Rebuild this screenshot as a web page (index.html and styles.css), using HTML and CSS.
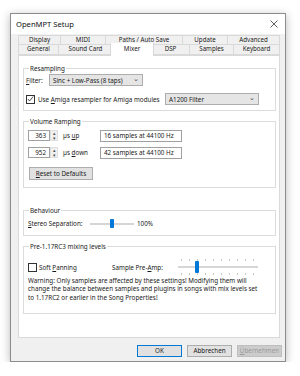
FILE: index.html
```html
<!DOCTYPE html>
<html>
<head>
<meta charset="utf-8">
<link rel="stylesheet" href="styles.css">
</head>
<body>
<div class="window">
  <div class="titlebar">
    <span class="title">OpenMPT Setup</span>
    <svg class="close" width="8" height="8" viewBox="0 0 8 8"><path d="M0.5 0.5 L7.5 7.5 M7.5 0.5 L0.5 7.5" stroke="#333" stroke-width="0.8"/></svg>
  </div>
  <div class="client">
    <div class="tabs">
      <div class="tabrow">
        <div class="tab w42">Display</div>
        <div class="tab w45">MIDI</div>
        <div class="tab w77">Paths / Auto Save</div>
        <div class="tab w45">Update</div>
        <div class="tab w53">Advanced</div>
      </div>
      <div class="tabrow">
        <div class="tab w40">General</div>
        <div class="tab w54">Sound Card</div>
        <div class="tab w40 sel">Mixer</div>
        <div class="tab w37">DSP</div>
        <div class="tab w44">Samples</div>
        <div class="tab w47">Keyboard</div>
      </div>
    </div>
    <div class="panel">
      <div class="group g-resamp">
        <div class="gtitle">Resampling</div>
        <div class="row r-filter">
          <span class="lbl"><u>F</u>ilter:</span>
          <div class="combo c-filter"><span>Sinc + Low-Pass (8 taps)</span><span class="chev">⌄</span></div>
        </div>
        <div class="row r-amiga">
          <span class="check on"><svg width="8" height="8" viewBox="0 0 8 8"><path d="M1 4 L3 6.3 L7 1.2" fill="none" stroke="#222" stroke-width="0.9"/></svg></span>
          <span class="lbl">Use <u>A</u>miga resampler for Amiga modules</span>
          <div class="combo c-a1200"><span>A1200 Filter</span><span class="chev">⌄</span></div>
        </div>
      </div>

      <div class="group g-ramp">
        <div class="gtitle">Volume Ramping</div>
        <div class="row r-ramp1">
          <div class="edit num">363</div>
          <div class="spin"><span>▴</span><span>▾</span></div>
          <span class="lbl unit">µs <u>u</u>p</span>
          <div class="edit info">16 samples at 44100 Hz</div>
        </div>
        <div class="row r-ramp2">
          <div class="edit num">952</div>
          <div class="spin"><span>▴</span><span>▾</span></div>
          <span class="lbl unit">µs <u>d</u>own</span>
          <div class="edit info">42 samples at 44100 Hz</div>
        </div>
        <div class="row r-reset">
          <div class="btn reset"><u>R</u>eset to Defaults</div>
        </div>
      </div>

      <div class="group g-behav">
        <div class="gtitle">Behaviour</div>
        <div class="row r-stereo">
          <span class="lbl stereo-lbl"><u>S</u>tereo Separation:</span>
          <div class="slider s-stereo"><div class="track"></div><div class="thumb" style="left:20px"></div></div>
          <span class="lbl pct">100%</span>
        </div>
      </div>

      <div class="group g-pre">
        <div class="gtitle">Pre-1.17RC3 mixing levels</div>
        <div class="row r-soft">
          <span class="check"></span>
          <span class="lbl soft-lbl">Soft <u>P</u>anning</span>
          <span class="lbl preamp-lbl">Sample Pre-<u>A</u>mp:</span>
          <div class="slider s-preamp">
            <div class="ticks top"></div>
            <div class="track"></div>
            <div class="ticks bot"></div>
            <div class="thumb tall" style="left:17px"></div>
          </div>
        </div>
        <div class="warn">Warning: Only samples are affected by these settings! Modifying them will change the balance between samples and plugins in songs with mix levels set to 1.17RC2 or earlier in the Song Properties!</div>
      </div>
    </div>
    <div class="buttons">
      <div class="btn dlg def">OK</div>
      <div class="btn dlg">Abbrechen</div>
      <div class="btn dlg dis"><u>Ü</u>bernehmen</div>
    </div>
  </div>
</div>
</body>
</html>
```
FILE: styles.css
```css
html, body {
  margin: 0;
  padding: 0;
  background: #ffffff;
}
body {
  padding: 13px 0 0 10px;
  font-family: "Noto Sans", "Open Sans", sans-serif;
  font-size: 6.3px;
  color: #1a1a1a;
}
u { text-decoration: underline; text-underline-offset: 1px; text-decoration-thickness: 0.5px; }

.window {
  width: 276px;
  height: 349px;
  box-sizing: border-box;
  border: 1px solid #8c8c8c;
  background: #f0f0f0;
  box-shadow: 0 2px 9px rgba(0,0,0,0.28);
  display: flex;
  flex-direction: column;
}
.titlebar {
  height: 20px;
  background: #ffffff;
  display: flex;
  align-items: center;
  justify-content: space-between;
  padding: 0 7px 0 5px;
  flex: none;
}
.title {
  font-size: 7.6px;
  color: #111;
}
.close { margin-top: -1px; }

.client {
  flex: 1;
  padding: 1px 5px 0 7px;
  display: flex;
  flex-direction: column;
}
.tabs { display: flex; flex-direction: column; }
.tabrow { display: flex; height: 10px; }
.tab {
  box-sizing: border-box;
  border: 1px solid #d9d9d9;
  border-right: none;
  background: #f0f0f0;
  text-align: center;
  line-height: 8px;
  color: #222;
  font-size: 6.2px;
}
.tabrow .tab:last-child { border-right: 1px solid #d9d9d9; }
.tabrow + .tabrow .tab { border-top: none; }
.tab.sel {
  background: #ffffff;
  position: relative;
  margin: -2px -2px -1px -2px;
  border: 1px solid #d9d9d9;
  border-bottom: none;
  line-height: 11px;
  z-index: 2;
  width: 44px;
}
.tab.sel + .tab { border-left: none; }
.w37 { width: 37px; } .w40 { width: 40px; } .w42 { width: 42px; } .w44 { width: 44px; }
.w45 { width: 45px; } .w47 { width: 47px; } .w53 { width: 53px; } .w54 { width: 54px; }
.w77 { width: 77px; }

.panel {
  height: 283px;
  box-sizing: border-box;
  background: #ffffff;
  border: 1px solid #d9d9d9;
  padding: 12px 3px 0 4px;
  display: flex;
  flex-direction: column;
}
.group {
  border: 1px solid #dcdcdc;
  box-sizing: border-box;
  padding: 0 2px;
  display: flex;
  flex-direction: column;
}
.gtitle {
  align-self: flex-start;
  margin: -5px 0 0 3px;
  padding: 0 1px;
  background: #ffffff;
  line-height: 9px;
  color: #222;
}
.g-resamp { height: 43px; }
.g-ramp { height: 67px; margin-top: 10px; }
.g-behav { height: 26px; margin-top: 22px; }
.g-pre { height: 68px; margin-top: 10px; }

.row { display: flex; align-items: center; }
.lbl { white-space: nowrap; }

.r-filter { margin-top: 1px; height: 12px; }
.r-filter .lbl { width: 23px; }
.combo {
  box-sizing: border-box;
  height: 12px;
  background: #e5e5e5;
  border: 1px solid #adadad;
  display: flex;
  align-items: center;
  justify-content: space-between;
  padding: 0 3px 0 3px;
  color: #1a1a1a;
}
.chev { font-size: 7px; line-height: 7px; margin-top: -3px; color: #444; }
.c-filter { width: 94px; }
.r-amiga { margin-top: 7px; height: 12px; }
.c-a1200 { width: 94px; margin-left: auto; margin-right: 14px; }

.check {
  box-sizing: border-box;
  width: 9px;
  height: 9px;
  border: 1px solid #333;
  background: #fff;
  display: flex;
  align-items: center;
  justify-content: center;
  margin-right: 3px;
  flex: none;
}

.r-ramp1 { margin-top: 4px; height: 11px; }
.r-ramp2 { margin-top: 6px; height: 11px; }
.edit {
  box-sizing: border-box;
  height: 11px;
  border: 1px solid #a0a0a0;
  background: #fff;
  line-height: 9px;
  padding: 0 3px;
}
.edit.num { width: 22px; text-align: right; margin-left: 2px; }
.spin {
  box-sizing: border-box;
  width: 8px;
  height: 11px;
  background: #f0f0f0;
  border: 1px solid #e0e0e0;
  display: flex;
  flex-direction: column;
  align-items: center;
  font-size: 5px;
  line-height: 4.5px;
  color: #555;
}
.unit { width: 37px; margin-left: 5px; }
.edit.info { width: 82px; height: 12px; line-height: 10px; }

.r-reset { margin-top: 9px; }
.btn {
  box-sizing: border-box;
  background: #e1e1e1;
  border: 1px solid #adadad;
  text-align: center;
  color: #1a1a1a;
}
.reset { width: 64px; height: 13px; line-height: 11px; margin-left: 3px; }

.r-stereo { margin-top: 3px; height: 11px; }
.stereo-lbl { margin-left: 2px; width: 62px; }
.slider { position: relative; }
.s-stereo { width: 44px; height: 11px; }
.track {
  position: absolute;
  left: 0; right: 0;
  top: 50%;
  height: 2px;
  margin-top: -1px;
  background: #e7e7e7;
  border: 1px solid #d6d6d6;
  box-sizing: border-box;
}
.thumb {
  position: absolute;
  top: 1px;
  width: 4px;
  height: 9px;
  background: #0078d7;
  border-radius: 1px;
}
.pct { margin-left: 3px; }

.r-soft { margin-top: 9px; height: 14px; }
.r-soft .check { margin-left: 2px; margin-right: 2px; }
.soft-lbl { width: 73px; }
.preamp-lbl { width: 66px; }
.s-preamp { width: 80px; height: 16px; }
.ticks {
  position: absolute;
  left: 3px; right: 3px;
  height: 2px;
  background-image: repeating-linear-gradient(to right, #c8c8c8 0, #c8c8c8 1px, transparent 1px, transparent 8px);
}
.ticks.top { top: 0; }
.ticks.bot { bottom: 0; }
.thumb.tall { top: 2px; height: 12px; }

.warn {
  margin: 3px 0 0 2px;
  line-height: 8.4px;
  width: 236px;
  color: #1a1a1a;
}

.buttons {
  display: flex;
  justify-content: flex-end;
  gap: 5px;
  margin-top: 7px;
  margin-right: -2px;
}
.dlg { width: 45px; height: 12px; line-height: 10px; }
.def { border: 1px solid #0078d7; }
.dis { background: #cccccc; border-color: #bfbfbf; color: #9a9a9a; }
```
